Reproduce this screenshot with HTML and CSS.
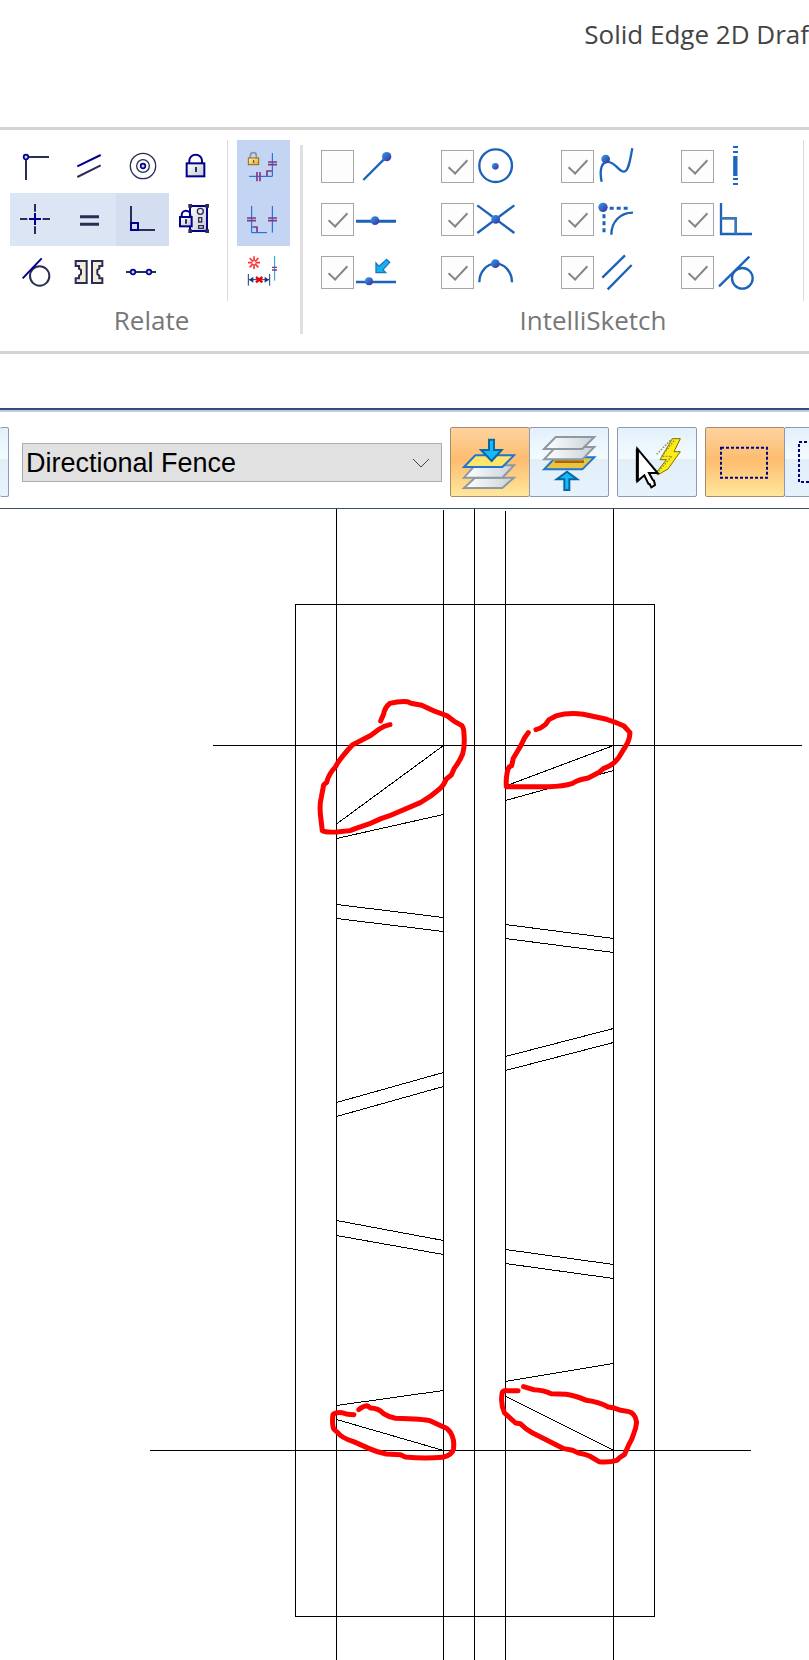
FILE: index.html
```html
<!DOCTYPE html>
<html lang="en">
<head>
    <title>Solid Edge 2D Drafting</title>
    <meta charset="UTF-8">
    <link rel="stylesheet" href="styles.css">
</head>
<body>
    <svg class="defs" width="0" height="0" aria-hidden="true">
        <defs>
            <linearGradient id="node" x1="0" y1="0" x2="1" y2="1">
                <stop offset="0" stop-color="#2fa0ea"/>
                <stop offset="1" stop-color="#3a2b9c"/>
            </linearGradient>
            <linearGradient id="steel" x1="0" y1="0" x2="1" y2="1">
                <stop offset="0" stop-color="#fff"/>
                <stop offset="1" stop-color="#c4c4cc"/>
            </linearGradient>
            <linearGradient id="gold" x1="0" y1="0" x2="1" y2="1">
                <stop offset="0" stop-color="#fff3c0"/>
                <stop offset="1" stop-color="#e0a820"/>
            </linearGradient>
            <linearGradient id="sheet" x1="0" y1="0" x2="1" y2="0">
                <stop offset="0" stop-color="#fff"/>
                <stop offset="1" stop-color="#c9d2d8"/>
            </linearGradient>
        </defs>
    </svg>

    <header class="titlebar">
        <h1>Solid Edge 2D Draf</h1>
    </header>

    <div class="ribbon">
        <section class="group relate">
            <div class="group-body">
                <div class="relate-grid">
                    <button aria-label="Connect"><svg viewBox="0 0 159 159"><path class="dark" d="M48 120V51H117"/><circle class="ring" cx="48" cy="51" r="7"/></svg></button>
                    <button aria-label="Parallel"><svg viewBox="0 0 159 159"><path class="navy" d="M43 79L113 45"/><path class="dark" d="M43 111L113 76"/></svg></button>
                    <button aria-label="Concentric"><svg viewBox="0 0 159 159"><circle class="dark thin" cx="81" cy="78" r="38"/><circle class="dark thin" cx="81" cy="78" r="19"/><circle class="ring" cx="81" cy="78" r="7"/></svg></button>
                    <button aria-label="Lock"><svg viewBox="0 0 159 159"><path class="navy" d="M61 70V62a19 18 0 0 1 38 0V70"/><rect class="navy steel" x="53" y="70" width="53" height="39"/><path class="dark" d="M81 81V96"/></svg></button>
                    <button class="on" aria-label="Horizontal/Vertical"><svg viewBox="0 0 159 159"><path class="dark" d="M30 78H52M98 78H120M75 33V56M75 100V123"/><path class="navy" d="M57 78H93M75 60V96"/></svg></button>
                    <button class="on" aria-label="Equal"><svg viewBox="0 0 159 159"><path class="dark thick" d="M51 71H108M51 94H108"/></svg></button>
                    <button class="on strong" aria-label="Perpendicular"><svg viewBox="0 0 159 159"><path class="dark" d="M45 39V111H117"/><path class="navy" d="M45 90H66V111H45Z"/></svg></button>
                    <button aria-label="Rigid Set"><svg viewBox="0 0 159 159"><rect class="navy steel" x="63" y="39" width="51" height="75"/><path d="M58 33h11v11h-11zM109 33h11v11h-11zM58 109h11v11h-11zM109 109h11v11h-11z" fill="#2a2d55"/><circle class="dark thin" cx="94" cy="55" r="9"/><path class="dark thin" d="M89 74h9v13h-9zM89 98h14v8h-14z"/><path class="navy" d="M38 72V66a13 13 0 0 1 26 0V72"/><rect class="navy steel" x="33" y="72" width="35" height="28"/><path class="dark" d="M51 79V92"/></svg></button>
                    <button aria-label="Tangent"><svg viewBox="0 0 159 159"><circle class="dark" cx="89" cy="90" r="29"/><path class="navy" d="M38 97L95 37"/></svg></button>
                    <button aria-label="Symmetric"><svg viewBox="0 0 159 159"><path class="dark cream" d="M38 45H71V111H38V97H48V89L54 84V72L48 68V60H38ZM118 45H87V111H118V97H109V89L103 84V72L109 68V60H118Z"/></svg></button>
                    <button aria-label="Collinear"><svg viewBox="0 0 159 159"><path class="dark" d="M30 78H120"/><circle class="ring" cx="51" cy="78" r="7"/><circle class="ring" cx="99" cy="78" r="7"/></svg></button>
                </div>
                <div class="relate-side">
                    <button class="on" aria-label="Maintain Relationships"><svg viewBox="0 0 159 159"><path class="azure" d="M106 39V109H36"/><path class="plum" d="M93 66H120M93 74H120M60 96V124M69 96V124M90 109V93H106"/><path d="M40 54V47a9 9 0 0 1 18 0V54" fill="none" stroke="#8b959c" stroke-width="5"/><rect x="34" y="54" width="31" height="20" fill="url(#gold)" stroke="#8c6a10" stroke-width="3"/><path d="M50 60V69" stroke="#554000" stroke-width="3"/></svg></button>
                    <button class="on" aria-label="Relationship Handles"><svg viewBox="0 0 159 159"><path class="azure" d="M44 39V119H90M106 39V119"/><path class="plum" d="M30 75H57M30 83H57M93 75H120M93 83H120M46 102H60V117"/></svg></button>
                    <button aria-label="Alert Indicators"><svg viewBox="0 0 159 159"><path d="M51 31V69M33 50H69M38 36L64 64M64 36L38 64" fill="none" stroke="#f33" stroke-width="5"/><circle cx="51" cy="50" r="5" fill="#fff"/><path d="M113 30V104" stroke="#189ad8" stroke-width="3"/><path class="plum thin" d="M105 64H120M105 72H120"/><path d="M34 84V119M98 84V119M36 101H96" fill="none" stroke="#123c82" stroke-width="3"/><path d="M36 101l13-9v18zM96 101l-13-9v18z" fill="#123c82"/><path d="M57 93L76 109M76 93L57 109" stroke="#e00" stroke-width="7"/></svg></button>
                </div>
            </div>
            <h2>Relate</h2>
        </section>

        <section class="group intelli">
            <div class="intelli-grid">
                <label><input type="checkbox" aria-label="End Point"><svg viewBox="0 0 126 159"><path class="blue" d="M25 120L95 50"/><circle class="node" cx="95" cy="50" r="14"/></svg></label>
                <label><input type="checkbox" aria-label="Center Point" checked><svg viewBox="0 0 126 159"><circle class="blue" cx="62" cy="77" r="49"/><circle class="node" cx="61" cy="79" r="10"/></svg></label>
                <label><input type="checkbox" aria-label="Edit Point" checked><svg viewBox="0 0 126 159"><path class="blue" d="M20 125C13 92 19 68 35 66C58 62 73 97 87 95C102 94 106 53 112 25"/><circle class="node" cx="32" cy="57" r="13"/></svg></label>
                <label><input type="checkbox" aria-label="Extension" checked><svg viewBox="0 0 126 159"><path d="M54 21H69M54 36H69M54 117H69M54 132H69" stroke="#1b66c2" stroke-width="6"/><path d="M61 48V108" stroke="#1b66c2" stroke-width="13"/></svg></label>
                <label><input type="checkbox" aria-label="Midpoint" checked><svg viewBox="0 0 126 159"><path class="blue thick" d="M3 85H123"/><circle class="node" cx="60" cy="83" r="13"/></svg></label>
                <label><input type="checkbox" aria-label="Intersection" checked><svg viewBox="0 0 126 159"><path class="blue" d="M7 37L118 120M118 37L7 120"/><circle class="node" cx="62" cy="79" r="13"/></svg></label>
                <label><input type="checkbox" aria-label="Silhouette Point" checked><svg viewBox="0 0 126 159"><path class="blue dots" d="M44 46H98M27 64V122"/><path class="blue" d="M49 125C49 86 76 59 114 59"/><circle class="node" cx="24" cy="43" r="14"/></svg></label>
                <label><input type="checkbox" aria-label="Perpendicular Point" checked><svg viewBox="0 0 126 159"><path class="blue" d="M18 30V123H111"/><path d="M18 76H62V123" fill="none" stroke="#3c78b8" stroke-width="8"/></svg></label>
                <label><input type="checkbox" aria-label="Point On" checked><svg viewBox="0 0 126 159"><path class="blue" d="M3 108H123"/><circle class="node" cx="42" cy="106" r="12"/><path d="M63 51V80H92L84 71L104 49L95 40L72 61Z" fill="#12b4ee" stroke="#1b76c2" stroke-width="4"/></svg></label>
                <label><input type="checkbox" aria-label="Arc Quadrant" checked><svg viewBox="0 0 126 159"><path class="blue" d="M13 109A49 56 0 0 1 111 109"/><circle class="node" cx="61" cy="53" r="13"/></svg></label>
                <label><input type="checkbox" aria-label="Parallel Lines" checked><svg viewBox="0 0 126 159"><path class="blue" d="M22 95L90 28M38 130L110 57"/></svg></label>
                <label><input type="checkbox" aria-label="Tangent Point" checked><svg viewBox="0 0 126 159"><circle class="blue" cx="82" cy="97" r="31"/><path class="blue" d="M12 121L103 32"/></svg></label>
            </div>
            <h2>IntelliSketch</h2>
        </section>
    </div>

    <div class="toolbar">
        <button class="tool cut" aria-label="Select"></button>
        <div class="picker">
            <select aria-label="Fence type">
                <option>Directional Fence</option>
            </select>
            <svg class="chevron" viewBox="0 0 18 10"><path d="M1 1L9 9L17 1"/></svg>
        </div>
        <div class="tools">
            <button class="tool active" aria-label="Bring to Front"><svg viewBox="0 0 240 210">
                <g stroke="#8d98a3" stroke-width="6"><path d="M42 183L75 152H192L157 183Z" fill="url(#sheet)"/><path d="M42 152L75 115H192L157 152Z" fill="url(#sheet)"/></g>
                <path d="M42 120L76 85H192L157 120Z" fill="#ffe56a" stroke="#1f74d6" stroke-width="6"/>
                <path d="M117 38H132V69H155L125 102L93 69H117Z" fill="#18b8fa" stroke="#0868a4" stroke-width="6"/>
            </svg></button>
            <button class="tool" aria-label="Send to Back"><svg viewBox="0 0 240 210">
                <path d="M45 127L80 91H196L160 127Z" fill="#e8c53c" stroke="#1f74d6" stroke-width="6"/>
                <path d="M77 104H165" stroke="#a86808" stroke-width="8"/>
                <g stroke="#8d98a3" stroke-width="6"><path d="M45 97L80 60H196L160 97Z" fill="url(#sheet)"/><path d="M45 66L80 30H196L160 66Z" fill="url(#sheet)"/></g>
                <path d="M106 189V157H83L114 134L145 157H121V189Z" fill="#18b8fa" stroke="#0868a4" stroke-width="6"/>
            </svg></button>
        </div>
        <div class="tools">
            <button class="tool" aria-label="Quick Select"><svg viewBox="0 0 240 210">
                <path d="M117 138L148 98H129L166 35H190L171 74H190L153 126L122 144Z" fill="#ffec10" stroke="#737300" stroke-width="3"/>
                <path d="M119 82L164 36M119 139L164 88H134L172 40" fill="none" stroke="#8c8c50" stroke-width="4" stroke-dasharray="5 4"/>
                <path d="M61 65V163L82 145L94 170L106 176L112 167L96 138H122Z" fill="#fff" stroke="#000" stroke-width="6"/>
                <path d="M61 65V163" stroke="#000" stroke-width="9"/>
                <path d="M97 169L103 181L114 174L110 158" fill="#fff" stroke="#000" stroke-width="6"/>
            </svg></button>
        </div>
        <div class="tools">
            <button class="tool active" aria-label="Inside Fence"><svg viewBox="0 0 240 210"><rect class="fence" x="48" y="62" width="138" height="90"/></svg></button>
            <button class="tool" aria-label="Overlapping Fence"><svg viewBox="0 0 240 210"><rect class="fence" x="45" y="45" width="150" height="120"/></svg></button>
        </div>
    </div>

    <main class="sheet">
        <svg viewBox="0 509 809 1151" role="img" aria-label="Drawing sheet">
            <g class="geometry">
                <path d="M336.500 509V1660M443.500 510V1660M474.500 509V1660M505.500 511V1660M613.500 509V1660"/>
                <rect x="295.500" y="604.500" width="359" height="1012"/>
                <path d="M213 745.500H802M150 1450.500H751"/>
                <!-- left column -->
                <path d="M336.500 824L443.500 745.500M336.500 838.500L443.500 814.500"/>
                <path d="M336.500 904.500L443.500 917.500M336.500 918.500L443.500 931.500"/>
                <path d="M336.500 1102.500L443.500 1072.500M336.500 1116.500L443.500 1086.500"/>
                <path d="M336.500 1220.500L443.500 1240.500M336.500 1235.500L443.500 1254.500"/>
                <path d="M336.500 1405.500L443.500 1390.500M336.500 1419.500L443.500 1450.500"/>
                <!-- right column -->
                <path d="M505.500 786L613.500 745.500M505.500 800.500L613.500 770.500"/>
                <path d="M505.500 924.500L613.500 938.500M505.500 938.500L613.500 952.500"/>
                <path d="M505.500 1056.500L613.500 1028.500M505.500 1070.500L613.500 1042.500"/>
                <path d="M505.500 1249.500L613.500 1264.500M505.500 1263.500L613.500 1278.500"/>
                <path d="M505.500 1381.500L613.500 1363.500M505.500 1396.200L613.500 1450.400"/>
            </g>
            <g class="marker">
                <g transform="translate(200 500) scale(.3333)">
                    <path d="M542 663L551 642Q554 623 570 610Q597 603 623 605L633 610L665 616Q700 634 742 648L763 664L786 677Q792 685 792 703Q795 738 788 762Q778 786 763 805L754 825L739 837Q732 856 720 866Q692 891 661 908L567 948L543 956L507 972L468 985L450 992L410 996Q376 998 367 992L363 959Q357 918 364 892L371 855L380 847Q386 822 407 800Q415 781 457 735L513 706L537 688Q553 677 570 674"/>
                    <path d="M985 698L973 715L962 738L940 775L935 797L927 801Q917 823 919 860H1045Q1090 859 1118 850Q1134 839 1165 834L1199 816L1210 806Q1240 796 1256 773L1278 737Q1289 720 1290 698L1272 678Q1250 667 1220 658L1150 643Q1105 637 1068 648L1047 659L1037 673Q1023 685 1008 689"/>
                </g>
                <g transform="translate(140 1300) scale(.3954 .3333)">
                    <path d="M541 344L526 343L510 338Q493 337 488 344Q485 373 490 387L501 399Q508 412 540 425L580 446Q600 457 623 462L659 464L671 471Q717 476 766 472Q790 464 793 446Q796 419 785 397Q777 383 766 380L735 363Q718 357 646 355Q630 352 616 341Q603 324 583 324L575 317Q565 317 553 329"/>
                    <path d="M956 272H929Q918 271 916 279Q911 312 922 339L950 369L962 371Q977 389 992 398L1072 446L1094 451L1109 459Q1127 463 1137 468L1161 485Q1185 488 1206 481L1214 472L1225 464L1236 435Q1245 417 1249 400Q1254 387 1256 367Q1253 340 1236 335L1216 331L1196 323L1184 321Q1163 307 1129 301Q1098 286 1077 283L1040 281Q1021 270 995 269L970 260"/>
                </g>
            </g>
        </svg>
    </main>
</body>
</html>
```

FILE: styles.css
```css
* {
    box-sizing: border-box;
}

body {
    margin: 0;
    background: #fff;
    color: #444;
    font-family: "Open Sans", "Noto Sans", sans-serif;
    overflow-x: hidden;
}

h1, h2 {
    margin: 0;
    font-weight: 400;
    font-size: 26px;
    line-height: 38px;
    white-space: nowrap;
}

button {
    padding: 0;
    border: 0;
    background: none;
    cursor: pointer;
}

svg {
    display: block;
}

.defs {
    position: absolute;
}

.titlebar {
    display: flex;
    justify-content: flex-end;
    height: 127px;
    padding-top: 15px;
}

/* Ribbon */
.ribbon {
    display: flex;
    height: 227px;
    border-top: 3px solid #d3d3d3;
    border-bottom: 3px solid #d3d3d3;
    overflow: hidden;
}

.group {
    position: relative;
    flex: none;
    padding-top: 10px;
}

.group h2 {
    color: #777;
    text-align: center;
}

.relate {
    width: 303px;
}

.relate::after {
    content: "";
    position: absolute;
    top: 15px;
    right: 0;
    width: 3px;
    height: 189px;
    background: #e0e0e0;
}

.group-body {
    display: flex;
    height: 161px;
    padding-left: 10px;
}

.relate-grid {
    display: grid;
    grid-template-columns: repeat(4, 53px);
    grid-auto-rows: 53px;
    padding-right: 5px;
    border-right: 1px solid #dcdcdc;
}

.relate-side {
    display: grid;
    grid-auto-rows: 53px;
    width: 53px;
    margin-left: 9px;
}

.group-body svg {
    width: 53px;
    height: 53px;
}

.relate-grid .on {
    background: #dce5f4;
}

.relate-grid .strong {
    background: #d3def1;
}

.relate-side .on {
    background: #c3d5f2;
}

.intelli {
    width: 580px;
}

.intelli-grid {
    display: grid;
    grid-template-columns: repeat(4, 120px);
    grid-auto-rows: 53px;
    width: 501px;
    height: 161px;
    padding-left: 18px;
    border-right: 1px solid #dcdcdc;
}

.intelli-grid label {
    display: flex;
    align-items: center;
    gap: 1px;
}

.intelli-grid svg {
    width: 42px;
    height: 53px;
}

input[type="checkbox"] {
    appearance: none;
    display: flex;
    justify-content: center;
    width: 33px;
    height: 33px;
    margin: 0;
    border: 1px solid #a6a6a6;
    background: #fdfdfd;
}

input[type="checkbox"]:checked::after {
    content: "";
    width: 8px;
    height: 17px;
    margin-top: 4px;
    border: solid #858585;
    border-width: 0 2px 2px 0;
    transform: rotate(43deg);
}

/* Icon strokes */
.dark, .navy, .blue, .azure, .plum {
    fill: none;
    stroke-width: 6;
}

.dark {
    stroke: #2a2d55;
}

.navy {
    stroke: #00008f;
}

.blue {
    stroke: #1b62ba;
    stroke-width: 7;
}

.azure {
    stroke: #0c62d8;
    stroke-width: 3;
}

.plum {
    stroke: #803a80;
    stroke-width: 5;
}

.thin {
    stroke-width: 4;
}

.thick {
    stroke-width: 9;
}

.dots {
    stroke-width: 9;
    stroke-dasharray: 12 9;
}

.steel {
    fill: url(#steel);
}

.cream {
    fill: #f5edd8;
}

.ring {
    fill: #c5d4ff;
    stroke: #00008f;
    stroke-width: 5;
}

.node {
    fill: url(#node);
}

/* Command bar */
.toolbar {
    display: flex;
    align-items: center;
    height: 101px;
    margin-top: 54px;
    padding-top: 6px;
    border-top: 2px solid #2f4f80;
    border-bottom: 1px solid #3a5068;
    box-shadow: inset 0 2px #c9cbdc;
    overflow: hidden;
}

.picker {
    position: relative;
    flex: none;
    width: 420px;
    margin: 0 8px 0 13px;
}

.picker select {
    appearance: none;
    width: 100%;
    height: 39px;
    padding: 2px 40px 0 3px;
    border: 1px solid #adadad;
    border-radius: 0;
    background: #e1e1e1;
    color: #000;
    font: 27px "Liberation Sans", sans-serif;
}

.chevron {
    position: absolute;
    top: 15px;
    right: 12px;
    width: 18px;
    height: 10px;
    fill: none;
    stroke: #444;
    pointer-events: none;
}

.tools {
    display: flex;
    flex: none;
    margin-right: 8px;
}

.tool {
    flex: none;
    width: 80px;
    height: 70px;
    border: 1px solid #8a9ab5;
    border-radius: 2px;
    background: linear-gradient(#e3f0fa, #f3fbff 45%, #e2eff8 46%, #e6f3fc);
}

.tool + .tool {
    margin-left: -1px;
}

.tool.active {
    border-color: #a88b68;
    background: linear-gradient(#fdd3a0, #fdbd70 45%, #fdbf72 50%, #ffe79c);
}

.tool.cut {
    width: 9px;
    border-left: 0;
}

.tool svg {
    width: 80px;
    height: 70px;
    margin: -1px;
}

.fence {
    fill: none;
    stroke: #000087;
    stroke-width: 6;
    stroke-dasharray: 9 6;
}

/* Drawing sheet */
.sheet svg {
    width: 100%;
    height: auto;
}

.geometry {
    fill: none;
    stroke: #000;
    stroke-width: 1;
    shape-rendering: crispEdges;
}

.marker path {
    fill: none;
    stroke: #f00;
    stroke-width: 5;
    stroke-linecap: round;
    stroke-linejoin: round;
    vector-effect: non-scaling-stroke;
}
```
